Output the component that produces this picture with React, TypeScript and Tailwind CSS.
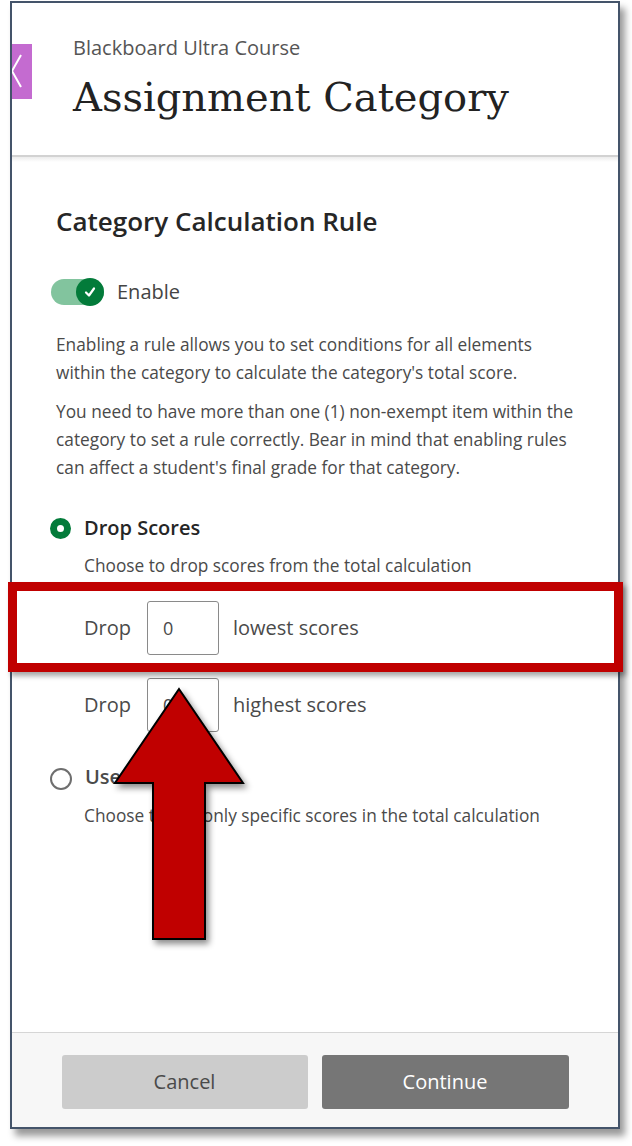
import React from 'react';

const sans = { fontFamily: '"Open Sans", "Liberation Sans", sans-serif' };

const App: React.FC = () => {
  return (
    <div className="relative w-[632px] h-[1146px] bg-white overflow-hidden" style={sans}>
      {/* Panel frame */}
      <div className="relative ml-[10px] mt-px w-[610px] h-[1128px] border-2 border-[#44546a] bg-white flex flex-col shadow-[5px_7px_7px_rgba(0,0,0,0.4)]">
        {/* Header */}
        <div className="relative h-[152px] shrink-0 pl-[61px] pt-[32px]">
          {/* Purple back tab */}
          <div className="absolute left-0 top-[41px] w-[20px] h-[55px] bg-[#c46bd0]">
            <svg width="20" height="55" viewBox="0 0 20 55">
              <polyline points="9,11 0,27 9,43" fill="none" stroke="#ffffff" strokeWidth="2" />
            </svg>
          </div>
          <p className="text-[20px] leading-[26px] text-[#555555]">Blackboard Ultra Course</p>
          <h1
            className="mt-[10px] text-[40px] leading-[52px] text-[#222222]"
            style={{ fontFamily: '"DejaVu Serif", "Liberation Serif", serif' }}
          >
            Assignment Category
          </h1>
        </div>
        <div className="h-[2px] bg-[#d2d2d2] shrink-0" />
        <div className="h-[5px] bg-gradient-to-b from-[#ececec] to-white shrink-0" />

        {/* Content */}
        <div className="flex-1 pl-[44px] pr-[16px] pt-[43px]">
          <h2 className="text-[26px] leading-[32px] font-semibold text-[#262626]">Category Calculation Rule</h2>

          {/* Toggle */}
          <div className="mt-[41px] -ml-[5px] flex items-center gap-[13px] h-[28px]">
            <div className="relative w-[53px] h-[26px] rounded-full bg-[#82c49e]">
              <div className="absolute right-0 -top-px w-[28px] h-[28px] rounded-full bg-[#037b3a] flex items-center justify-center">
                <svg width="14" height="14" viewBox="0 0 14 14">
                  <polyline points="3,7.5 6,10.5 11,3.5" fill="none" stroke="#ffffff" strokeWidth="2.2" strokeLinecap="round" strokeLinejoin="round" />
                </svg>
              </div>
            </div>
            <span className="text-[20px] text-[#444444]">Enable</span>
          </div>

          <p className="mt-[25px] text-[17.3px] leading-[28px] text-[#4a4a4a]">
            Enabling a rule allows you to set conditions for all elements
            <br />
            within the category to calculate the category's total score.
          </p>
          <p className="mt-[11px] text-[17.3px] leading-[28px] text-[#4a4a4a]">
            You need to have more than one (1) non-exempt item within the
            <br />
            category to set a rule correctly. Bear in mind that enabling rules
            <br />
            can affect a student's final grade for that category.
          </p>

          {/* Drop scores */}
          <div className="mt-[32px] -ml-[6px] flex items-center gap-[13px] h-[28px]">
            <div className="w-[21px] h-[21px] rounded-full border-[7px] border-[#037b3a] bg-white" />
            <span className="text-[20px] font-semibold text-[#262626]">Drop Scores</span>
          </div>
          <p className="mt-[12px] ml-[28px] text-[17.3px] leading-[24px] text-[#4a4a4a]">
            Choose to drop scores from the total calculation
          </p>

          <div className="mt-[23px] ml-[28px] flex items-center">
            <span className="w-[63px] text-[20px] text-[#4a4a4a]">Drop</span>
            <div className="w-[72px] h-[54px] rounded-[3px] border border-[#8a8a8a] pl-[15px] flex items-center text-[18px] text-[#4a4a4a]">0</div>
            <span className="ml-[14px] text-[20px] text-[#4a4a4a]">lowest scores</span>
          </div>
          <div className="mt-[23px] ml-[28px] flex items-center">
            <span className="w-[63px] text-[20px] text-[#4a4a4a]">Drop</span>
            <div className="w-[72px] h-[54px] rounded-[3px] border border-[#8a8a8a] pl-[15px] flex items-center text-[18px] text-[#4a4a4a]">0</div>
            <span className="ml-[14px] text-[20px] text-[#4a4a4a]">highest scores</span>
          </div>

          {/* Use scores */}
          <div className="mt-[33px] -ml-[6px] flex items-center gap-[13px] h-[28px]">
            <div className="w-[22px] h-[22px] rounded-full border-2 border-[#6e6e6e] bg-white" />
            <span className="mb-[4px] text-[20px] font-semibold text-[#4a4a4a]">Use Only</span>
          </div>
          <p className="mt-[11px] ml-[28px] text-[17.3px] leading-[24px] text-[#4a4a4a]">
            Choose to use only specific scores in the total calculation
          </p>
        </div>

        {/* Footer */}
        <div className="h-[95px] shrink-0 border-t border-[#d6d6d6] bg-[#f7f7f7] flex items-start pt-[22px] justify-center gap-[14px]">
          <button className="w-[246px] h-[54px] rounded-[3px] bg-[#cccccc] text-[20px] text-[#4a4a4a]">Cancel</button>
          <button className="w-[247px] h-[54px] rounded-[3px] bg-[#767676] text-[20px] font-medium text-white">Continue</button>
        </div>
      </div>

      {/* Callout box */}
      <div className="absolute left-[8px] top-[582px] w-[615px] h-[90px] border-[9px] border-[#c00000] shadow-[3px_4px_5px_rgba(0,0,0,0.35)]" />

      {/* Callout arrow */}
      <svg
        className="absolute left-[100px] top-[680px] drop-shadow-[3px_4px_3px_rgba(0,0,0,0.45)]"
        width="160"
        height="270"
        viewBox="0 0 160 270"
      >
        <polygon
          points="79,9 143,103 105,103 105,259 53,259 53,103 15,103"
          fill="#c00000"
          stroke="#000000"
          strokeWidth="2"
          strokeLinejoin="miter"
        />
      </svg>
    </div>
  );
};

export default App;
